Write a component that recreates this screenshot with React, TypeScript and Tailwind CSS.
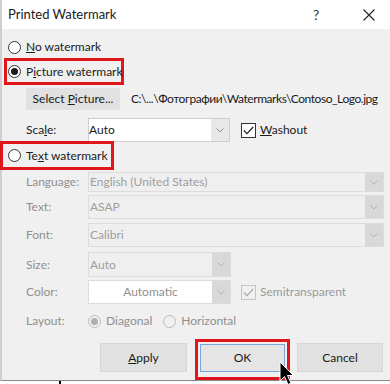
import React from "react";

const font = { fontFamily: 'Lato, "Noto Sans", sans-serif' };

const Chevron = ({ color = "#8a8a8a" }: { color?: string }) => (
  <svg width="8" height="5" viewBox="0 0 8 5">
    <path d="M0.5 0.5 L4 4 L7.5 0.5" fill="none" stroke={color} strokeWidth="1" />
  </svg>
);

const Radio = ({ checked, disabled }: { checked?: boolean; disabled?: boolean }) => (
  <span
    className={`w-[13px] h-[13px] rounded-full border flex items-center justify-center shrink-0 ${
      disabled ? "border-[#bcbcbc] bg-[#f0f0f0]" : "border-[#333] bg-white"
    }`}
  >
    {checked && (
      <span className={`w-[7px] h-[7px] rounded-full ${disabled ? "bg-[#b0b0b0]" : "bg-[#1a1a1a]"}`} />
    )}
  </span>
);

const Check = ({ disabled }: { disabled?: boolean }) => (
  <span
    className={`w-[15px] h-[15px] border flex items-center justify-center shrink-0 ${
      disabled ? "border-[#c4c4c4] bg-[#f0f0f0]" : "border-[#333] bg-white"
    }`}
  >
    <svg width="11" height="9" viewBox="0 0 11 9">
      <path d="M0.8 4.5 L4 7.7 L10.2 1" fill="none" stroke={disabled ? "#a8a8a8" : "#222"} strokeWidth="1.2" />
    </svg>
  </span>
);

const Label = ({ children, disabled }: { children: React.ReactNode; disabled?: boolean }) => (
  <span className={`w-[62px] shrink-0 whitespace-nowrap text-[12px] ${disabled ? "text-[#8f8f8f]" : "text-[#1a1a1a]"}`}>
    {children}
  </span>
);

const DisabledSelect = ({ value, width }: { value: string; width: string }) => (
  <div className={`${width} h-full shrink-0 flex border border-[#dcdcdc] bg-[#efefef]`}>
    <span className="flex-1 pl-[1px] flex items-center text-[12px] text-[#9e9e9e] whitespace-nowrap">{value}</span>
    <span className="w-[18px] bg-[#d8d8d8] flex items-center justify-center">
      <Chevron color="#b4b4b4" />
    </span>
  </div>
);

export default function App() {
  return (
    <div className="w-[390px] h-[384px] bg-white relative overflow-hidden select-none whitespace-nowrap" style={font}>
      <div className="h-[381px] flex flex-col border-l-2 border-l-[#cfcfcf] border-b border-b-[#8a8a8a]">
        {/* Title bar */}
        <div className="h-[29px] bg-white flex items-center pl-[6px] shrink-0">
          <span className="text-[13px] text-[#1a1a1a]">Printed Watermark</span>
          <span className="ml-auto text-[14px] text-[#333] w-[10px]">?</span>
          <span className="ml-[40px] mr-[15px]">
            <svg width="12" height="12" viewBox="0 0 12 12">
              <path d="M0.5 0.5 L11.5 11.5 M11.5 0.5 L0.5 11.5" stroke="#222" strokeWidth="1.1" />
            </svg>
          </span>
        </div>

        {/* Body */}
        <div className="flex-1 bg-[#f0f0f0] flex flex-col text-[12px] text-[#1a1a1a]">
          <div className="mt-[10px] h-[16px] flex items-center gap-[5px] pl-[6px]">
            <Radio />
            <span>
              <span className="underline">N</span>o watermark
            </span>
          </div>

          <div className="mt-[3px] h-[27px] w-[120px] ml-[2px] border-[3px] border-[#e0161b] flex items-center gap-[5px] pl-[1px]">
            <Radio checked />
            <span>
              P<span className="underline">i</span>cture watermark
            </span>
          </div>

          <div className="mt-[3px] h-[22px] flex items-center ml-[24px]">
            <button className="w-[94px] h-full shrink-0 bg-[#e1e1e1] text-[12px] text-[#1a1a1a]">
              Select <span className="underline">P</span>icture...
            </button>
            <span className="ml-[11px] text-[12px] tracking-[-0.45px]">C:\...\Фотографии\Watermarks\Contoso_Logo.jpg</span>
          </div>

          <div className="mt-[8px] h-[24px] flex items-center pl-[24px]">
            <Label>
              Sca<span className="underline">l</span>e:
            </Label>
            <div className="w-[142px] h-full shrink-0 flex border border-[#cdcdcd] bg-white">
              <span className="flex-1 flex items-center text-[12px]">Auto</span>
              <span className="w-[18px] bg-[#e8e8e8] flex items-center justify-center">
                <Chevron />
              </span>
            </div>
            <span className="ml-[11px] flex items-center gap-[4px]">
              <Check />
              <span>
                <span className="underline">W</span>ashout
              </span>
            </span>
          </div>

          <div className="relative mt-[-1px] h-[29px] w-[114px] ml-[-2px] border-[3px] border-[#e0161b] flex items-center gap-[5px] pl-[5px]">
            <Radio />
            <span>
              Te<span className="underline">x</span>t watermark
            </span>
          </div>

          <div className="mt-[2px] h-[20px] flex items-center pl-[24px]">
            <Label disabled>Language:</Label>
            <DisabledSelect value="English (United States)" width="w-[296px]" />
          </div>
          <div className="mt-[3px] h-[24px] flex items-center pl-[24px]">
            <Label disabled>Text:</Label>
            <DisabledSelect value="ASAP" width="w-[296px]" />
          </div>
          <div className="mt-[4px] h-[24px] flex items-center pl-[24px]">
            <Label disabled>Font:</Label>
            <DisabledSelect value="Calibri" width="w-[296px]" />
          </div>
          <div className="mt-[5px] h-[25px] flex items-center pl-[24px]">
            <Label disabled>Size:</Label>
            <DisabledSelect value="Auto" width="w-[143px]" />
          </div>
          <div className="mt-[3px] h-[24px] flex items-center pl-[24px]">
            <Label disabled>Color:</Label>
            <div className="w-[143px] h-full shrink-0 flex border border-[#dcdcdc] bg-white">
              <span className="flex-1 flex items-center justify-center text-[12px] text-[#8f8f8f]">Automatic</span>
              <span className="w-[18px] bg-[#d8d8d8] flex items-center justify-center">
                <Chevron color="#b4b4b4" />
              </span>
            </div>
            <span className="ml-[10px] flex items-center gap-[4px] text-[#9a9a9a]">
              <Check disabled />
              <span>Semitransparent</span>
            </span>
          </div>

          <div className="mt-[9px] h-[16px] flex items-center pl-[24px] text-[#8f8f8f]">
            <Label disabled>Layout:</Label>
            <span className="flex items-center gap-[5px]">
              <Radio checked disabled />
              <span>Diagonal</span>
            </span>
            <span className="ml-[11px] flex items-center gap-[5px]">
              <Radio disabled />
              <span>Horizontal</span>
            </span>
          </div>

          <div className="mt-[10px] h-[41px] flex items-start">
            <button className="ml-[98px] mt-[4px] w-[87px] h-[29px] shrink-0 bg-[#e1e1e1] border border-[#d6d6d6] text-[12px] text-[#1a1a1a]">
              <span className="underline">A</span>pply
            </button>
            <div className="ml-[8px] w-[95px] h-[41px] shrink-0 border-[3px] border-[#e0161b] pt-[2px] pl-[2px]">
              <button className="w-[85px] h-[28px] bg-[#e5e5e5] border border-[#7aa7d9] text-[12px] text-[#1a1a1a]">
                OK
              </button>
            </div>
            <button className="ml-[7px] mt-[4px] w-[86px] h-[29px] shrink-0 bg-[#e1e1e1] border border-[#d6d6d6] text-[12px] text-[#1a1a1a]">
              Cancel
            </button>
          </div>
        </div>
      </div>

      {/* Document behind the dialog */}
      <div className="absolute left-[59px] top-[381px] w-[2px] h-[3px] bg-black" />

      {/* Mouse cursor */}
      <svg className="absolute left-[279px] top-[361px]" width="20" height="28" viewBox="0 0 20 28">
        <path
          d="M1 1 L1 20 L5.5 15.5 L9 23.5 L12 22 L8.5 14.5 L14.5 14.5 Z"
          fill="#000"
          stroke="#fff"
          strokeWidth="1"
        />
      </svg>
    </div>
  );
}
